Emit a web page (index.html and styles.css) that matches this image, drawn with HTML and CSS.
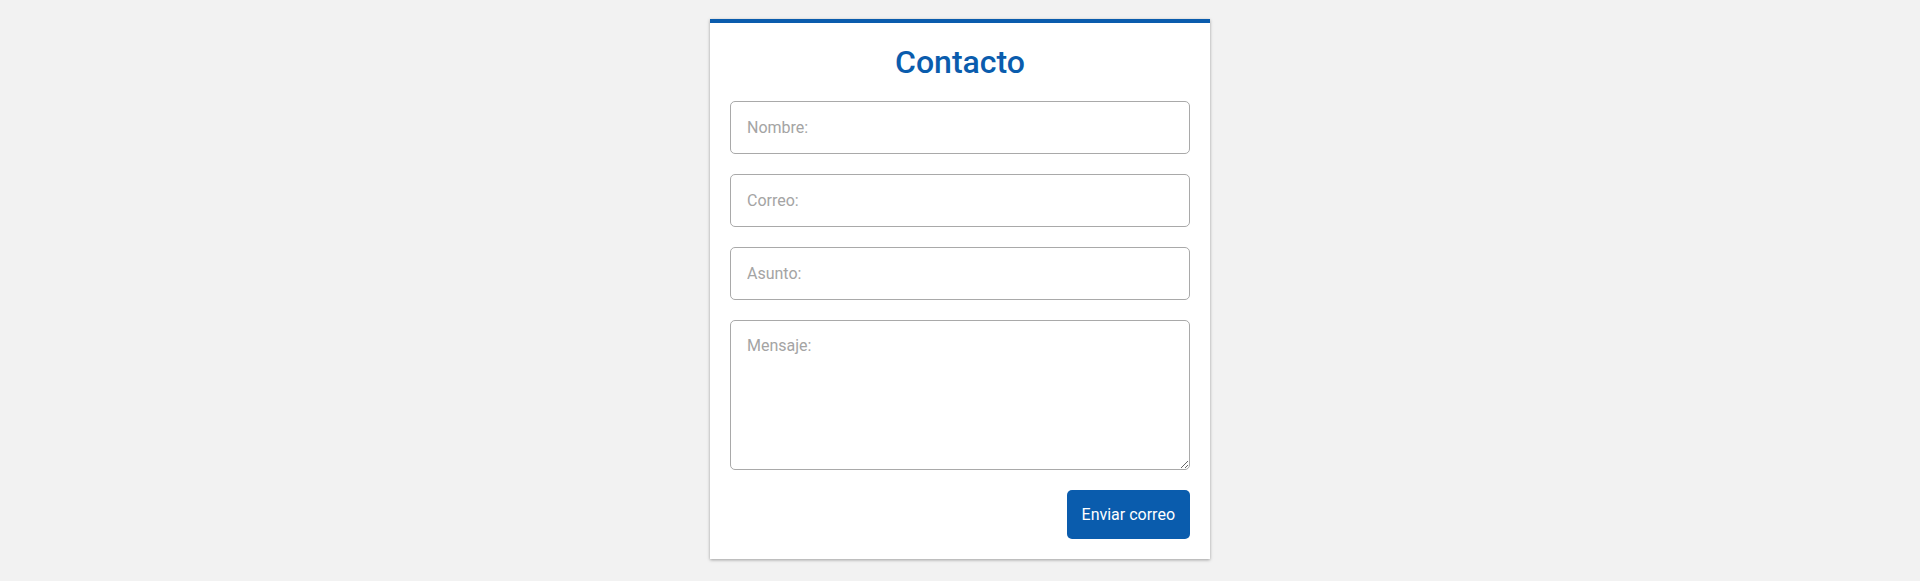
FILE: index.html
```html
<!DOCTYPE html>
<html lang="es">
<head>
<meta charset="utf-8">
<title>Contacto</title>
<link rel="stylesheet" href="styles.css">
</head>
<body>
<main class="page">
  <form class="card">
    <h1 class="title">Contacto</h1>
    <input class="field" type="text" placeholder="Nombre:">
    <input class="field" type="email" placeholder="Correo:">
    <input class="field" type="text" placeholder="Asunto:">
    <textarea class="field area" placeholder="Mensaje:"></textarea>
    <div class="actions">
      <button class="btn" type="button">Enviar correo</button>
    </div>
  </form>
</main>
</body>
</html>
```
FILE: styles.css
```css
html, body {
  margin: 0;
  padding: 0;
  background: #f2f2f2;
  font-family: Roboto, "Liberation Sans", Arial, sans-serif;
}
.page {
  display: flex;
  justify-content: center;
  padding: 19px 0 20px;
}
.card {
  box-sizing: border-box;
  width: 500px;
  background: #fff;
  border-top: 4px solid #0a5cad;
  box-shadow: 0 1px 3px rgba(0, 0, 0, 0.35);
  padding: 20px;
  display: flex;
  flex-direction: column;
  gap: 20px;
}
.title {
  margin: 0;
  text-align: center;
  font-size: 32px;
  line-height: 38px;
  font-weight: 500;
  color: #0a5cad;
}
.field {
  box-sizing: border-box;
  width: 100%;
  height: 53px;
  margin: 0;
  padding: 0 16px;
  border: 1px solid #a9a9a9;
  border-radius: 5px;
  font-family: inherit;
  font-size: 16px;
  color: #333;
  background: #fff;
  outline: none;
}
.field::placeholder {
  color: #a4a4a4;
}
.area {
  height: 150px;
  padding: 15px 16px;
  resize: vertical;
  line-height: 1.2;
}
.actions {
  display: flex;
  justify-content: flex-end;
}
.btn {
  height: 49px;
  padding: 0 15px;
  border: none;
  border-radius: 5px;
  background: #0a5cad;
  color: #fff;
  font-family: inherit;
  font-size: 16px;
  cursor: pointer;
}
```
